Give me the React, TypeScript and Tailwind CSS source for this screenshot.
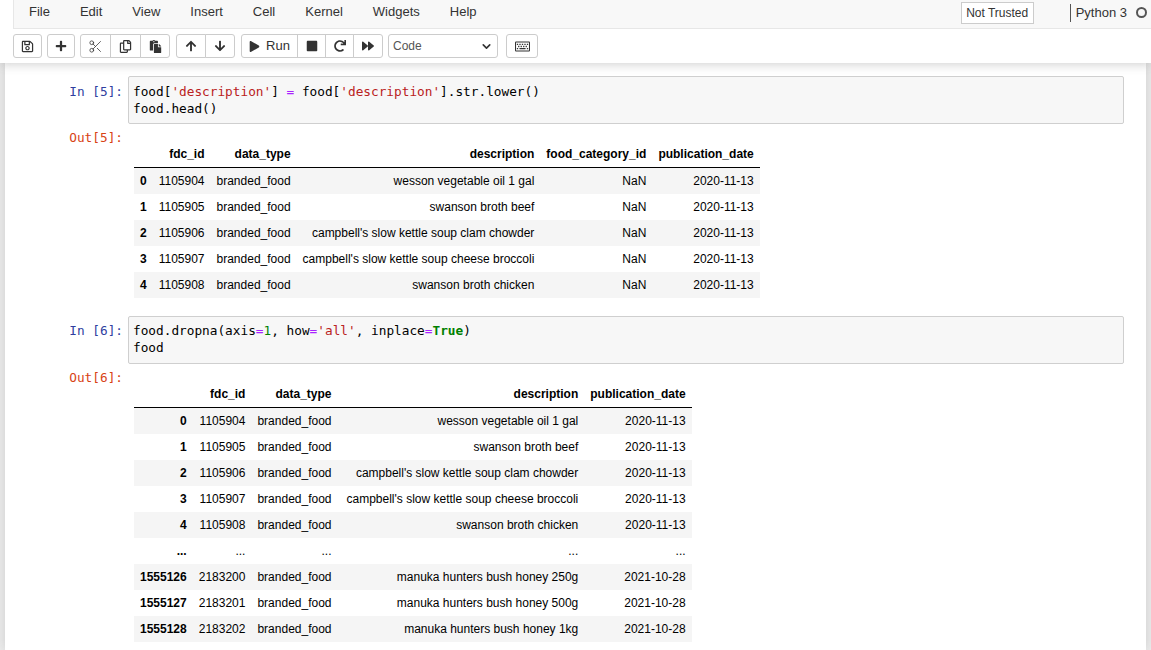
import React from 'react';
import { ChevronDown, Scissors } from 'lucide-react';
import { FaRegSave, FaPlus, FaRegCopy, FaPaste, FaArrowUp, FaArrowDown, FaPlay, FaStop, FaRedo, FaForward, FaRegKeyboard } from 'react-icons/fa';

const menus = ['File', 'Edit', 'View', 'Insert', 'Cell', 'Kernel', 'Widgets', 'Help'];

const Btn = ({ children, className = '' }: { children: React.ReactNode; className?: string }) => (
  <div className={`h-[24px] flex items-center justify-center border border-[#ccc] -ml-px first:ml-0 first:rounded-l-[3px] last:rounded-r-[3px] bg-white text-[#333] ${className}`}>
    {children}
  </div>
);

type Row = string[];

const table5: Row[] = [
  ['0', '1105904', 'branded_food', 'wesson vegetable oil 1 gal', 'NaN', '2020-11-13'],
  ['1', '1105905', 'branded_food', 'swanson broth beef', 'NaN', '2020-11-13'],
  ['2', '1105906', 'branded_food', "campbell's slow kettle soup clam chowder", 'NaN', '2020-11-13'],
  ['3', '1105907', 'branded_food', "campbell's slow kettle soup cheese broccoli", 'NaN', '2020-11-13'],
  ['4', '1105908', 'branded_food', 'swanson broth chicken', 'NaN', '2020-11-13'],
];

const table6: Row[] = [
  ['0', '1105904', 'branded_food', 'wesson vegetable oil 1 gal', '2020-11-13'],
  ['1', '1105905', 'branded_food', 'swanson broth beef', '2020-11-13'],
  ['2', '1105906', 'branded_food', "campbell's slow kettle soup clam chowder", '2020-11-13'],
  ['3', '1105907', 'branded_food', "campbell's slow kettle soup cheese broccoli", '2020-11-13'],
  ['4', '1105908', 'branded_food', 'swanson broth chicken', '2020-11-13'],
  ['...', '...', '...', '...', '...'],
  ['1555126', '2183200', 'branded_food', 'manuka hunters bush honey 250g', '2021-10-28'],
  ['1555127', '2183201', 'branded_food', 'manuka hunters bush honey 500g', '2021-10-28'],
  ['1555128', '2183202', 'branded_food', 'manuka hunters bush honey 1kg', '2021-10-28'],
];

const DataFrame = ({ head, rows, wide }: { head: string[]; rows: Row[]; wide?: boolean }) => (
  <table className="border-separate border-spacing-0 text-[12px] leading-[16px] text-black font-['Liberation_Sans',sans-serif]">
    <thead>
      <tr>
        <th className="h-[27px] px-[6px] border-b border-black"></th>
        {head.map((h) => (
          <th key={h} className={`px-[6px] text-right font-bold whitespace-nowrap align-middle border-b border-black ${wide && h === 'description' ? 'pl-[9px]' : ''}`}>{h}</th>
        ))}
      </tr>
    </thead>
    <tbody>
      {rows.map((r, i) => (
        <tr key={r[0]} className={i % 2 === 0 ? 'bg-[#f5f5f5] h-[26px]' : 'bg-white h-[26px]'}>
          {r.map((c, j) => (
            <td key={j} className={`px-[6px] text-right whitespace-nowrap ${j === 0 ? 'font-bold' : ''} ${wide && j === 3 ? 'pl-[9px]' : ''}`}>{c}</td>
          ))}
        </tr>
      ))}
    </tbody>
  </table>
);

const Prompt = ({ label, out, tight }: { label: string; out?: boolean; tight?: boolean }) => (
  <div className={`w-[123px] shrink-0 pr-[5px] text-right text-[12.75px] leading-[17px] font-['DejaVu_Sans_Mono',monospace] ${out ? 'pt-[5px] text-[#d84315]' : 'text-[#303f9f]'} ${!out && tight ? 'pt-[6px]' : ''} ${!out && !tight ? 'pt-[7px]' : ''}`}>
    {label}
  </div>
);

const Code = ({ children, tight }: { children: React.ReactNode; tight?: boolean }) => (
  <div className={`w-[996px] h-[47.5px] border border-[#cfcfcf] rounded-[2px] bg-[#f7f7f7] pl-[4px] pr-[5px] text-[12.75px] leading-[17px] text-black font-['DejaVu_Sans_Mono',monospace] whitespace-pre ${tight ? 'pt-[5px]' : 'pt-[6px]'}`}>
    {children}
  </div>
);

const Str = ({ children }: { children: React.ReactNode }) => <span className="text-[#ba2121]">{children}</span>;
const Op = ({ children }: { children: React.ReactNode }) => <span className="text-[#aa22ff]">{children}</span>;

export default function App() {
  return (
    <div className="w-[1151px] h-[650px] overflow-hidden flex flex-col bg-[#eee] font-['Liberation_Sans',sans-serif]">
      <div className="relative z-10 bg-white h-[63px] shrink-0 pl-[13px] shadow-[0_1px_10px_rgba(87,87,87,0.3)]">
        <div className="h-[29px] bg-[#f8f8f8] border-b border-l border-[#e7e7e7] flex items-center text-[13px] text-[#333] pb-[5px]">
          <div className="flex pl-[15px] gap-[30px]">
            {menus.map((m) => <span key={m}>{m}</span>)}
          </div>
          <div className="ml-auto flex items-center">
            <div className="w-[73px] h-[22px] mt-[2px] border border-[#ccc] bg-white text-[12px] flex items-center justify-center mr-[36px]">Not Trusted</div>
            <div className="h-[18px] mt-[2px] border-l border-[#555] pl-[5px] text-[13px] leading-[18px] pr-[9px]">Python 3</div>
            <div className="w-[11px] h-[11px] mt-[2px] rounded-full border-2 border-[#555] mr-[4px]"></div>
          </div>
        </div>
        <div className="flex mt-[5px] gap-[5px] items-center">
          <div className="flex"><Btn className="w-[29px]"><FaRegSave size={13} /></Btn></div>
          <div className="flex"><Btn className="w-[28px]"><FaPlus size={12} /></Btn></div>
          <div className="flex">
            <Btn className="w-[31px]"><Scissors size={15} strokeWidth={1.25} /></Btn>
            <Btn className="w-[31px]"><FaRegCopy size={13} /></Btn>
            <Btn className="w-[30px]"><FaPaste size={13} /></Btn>
          </div>
          <div className="flex ml-px">
            <Btn className="w-[30px]"><FaArrowUp size={12} /></Btn>
            <Btn className="w-[30px]"><FaArrowDown size={12} /></Btn>
          </div>
          <div className="flex ml-px">
            <Btn className="w-[57px] gap-[6px] text-[13px]"><FaPlay size={11} />Run</Btn>
            <Btn className="w-[29px]"><FaStop size={12} /></Btn>
            <Btn className="w-[29px]"><FaRedo size={12} /></Btn>
            <Btn className="w-[30px]"><FaForward size={12} /></Btn>
          </div>
          <div className="w-[110px] h-[24px] border border-[#ccc] rounded-[3px] bg-white text-[12px] text-[#555] flex items-center justify-between pl-[4px] pr-[4px]">
            Code<ChevronDown size={13} strokeWidth={3} className="text-[#333]" />
          </div>
          <div className="flex ml-[3px]"><Btn className="w-[32px]"><FaRegKeyboard size={15} /></Btn></div>
        </div>
      </div>
      <div className="flex-1 mx-[5px] bg-white overflow-hidden pt-[13px] shadow-[0_0_12px_1px_rgba(87,87,87,0.2)]">
        <div className="flex">
          <Prompt label="In [5]:" />
          <Code>
            food[<Str>'description'</Str>] <Op>=</Op> food[<Str>'description'</Str>].str.lower(){'\n'}food.head()
          </Code>
        </div>
        <div className="flex">
          <Prompt label="Out[5]:" out />
          <div className="pt-[17.5px] pl-[6px]">
            <DataFrame head={['fdc_id', 'data_type', 'description', 'food_category_id', 'publication_date']} rows={table5} />
          </div>
        </div>
        <div className="flex mt-[18px]">
          <Prompt label="In [6]:" tight />
          <Code tight>
            food.dropna(axis<Op>=</Op><span className="text-[#008000]">1</span>, how<Op>=</Op><Str>'all'</Str>, inplace<Op>=</Op><span className="font-bold text-[#008000]">True</span>){'\n'}food
          </Code>
        </div>
        <div className="flex">
          <Prompt label="Out[6]:" out />
          <div className="pt-[17.5px] pl-[6px]">
            <DataFrame wide head={['fdc_id', 'data_type', 'description', 'publication_date']} rows={table6} />
          </div>
        </div>
      </div>
    </div>
  );
}
